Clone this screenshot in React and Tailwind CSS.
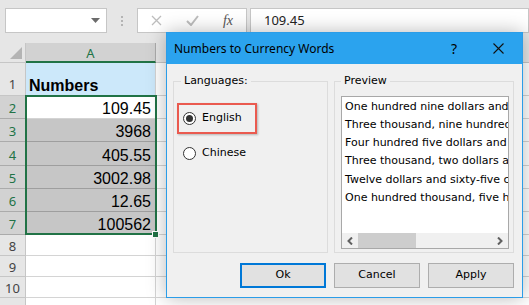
import React from 'react';

const CELLS = [
  { n: 2, v: '109.45', h: 'h-[23px]', active: true },
  { n: 3, v: '3968', h: 'h-[23px]' },
  { n: 4, v: '405.55', h: 'h-[24px]' },
  { n: 5, v: '3002.98', h: 'h-[23px]' },
  { n: 6, v: '12.65', h: 'h-[23px]' },
  { n: 7, v: '100562', h: 'h-[23px]' },
];

const PREVIEW = [
  'One hundred nine dollars and forty-five cents',
  'Three thousand, nine hundred sixty-eight dollars',
  'Four hundred five dollars and fifty-five cents',
  'Three thousand, two dollars and ninety-eight cents',
  'Twelve dollars and sixty-five cents',
  'One hundred thousand, five hundred sixty-two dollars',
];

function FormulaBar() {
  return (
    <div className="flex h-[43px] items-start bg-[#e6e6e6] pl-[5px] pt-[8px]">
      <div className="relative h-[25px] w-[102px] border border-[#c6c6c6] bg-white">
        <svg className="absolute right-[6px] top-[9px]" width="9" height="5" viewBox="0 0 9 5">
          <path d="M0 0h9L4.5 5z" fill="#6b6b6b" />
        </svg>
      </div>
      <div className="flex h-[25px] w-[30px] flex-col items-center justify-center gap-[2px]">
        <span className="h-[2px] w-[2px] bg-[#b4b4b4]" />
        <span className="h-[2px] w-[2px] bg-[#b4b4b4]" />
        <span className="h-[2px] w-[2px] bg-[#b4b4b4]" />
      </div>
      <div className="grid h-[25px] w-[110px] grid-cols-3 place-items-center border border-[#c6c6c6] bg-white">
        <svg width="11" height="11" viewBox="0 0 11 11">
          <path d="M1 1l9 9M10 1l-9 9" stroke="#bdbdbd" strokeWidth="1.3" />
        </svg>
        <svg width="13" height="11" viewBox="0 0 13 11">
          <path d="M1 6l4 4 7-9" stroke="#bdbdbd" strokeWidth="2" fill="none" />
        </svg>
        <span className="font-['Liberation_Serif',serif] text-[14px] italic leading-none text-[#555]">fx</span>
      </div>
      <div className="ml-[3px] flex h-[25px] flex-1 items-center border border-[#c6c6c6] bg-white pl-[13px] font-['Noto_Sans',sans-serif] text-[13px] text-[#222]">
        109.45
      </div>
    </div>
  );
}

function Grid() {
  return (
    <div className="relative">
      <div className="flex h-[20px]">
        <div className="relative w-[26px] border-b border-r border-[#c6c6c6] bg-[#e6e6e6]">
          <svg className="absolute bottom-[3px] right-[3px]" width="12" height="12" viewBox="0 0 12 12">
            <path d="M12 0v12H0z" fill="#b4b4b4" />
          </svg>
        </div>
        <div className="flex w-[130px] items-center justify-center border-b-2 border-r border-b-[#217346] border-r-[#ababab] bg-[#d2d2d2] pt-[2px] font-['Noto_Sans',sans-serif] text-[13px] leading-none text-[#217346]">
          A
        </div>
        <div className="flex-1 border-b border-[#c6c6c6] bg-[#e6e6e6]" />
      </div>

      <div className="flex h-[33px]">
        <div className="flex w-[26px] items-end justify-center border-b border-r border-[#c6c6c6] bg-[#e6e6e6] pb-[4px] font-['Noto_Sans',sans-serif] text-[13px] leading-none text-[#444]">
          1
        </div>
        <div className="flex w-[130px] items-end border-b border-r border-[#d4d4d4] bg-[#cce8fa] pb-[1px] pl-[3px] text-[16px] font-bold leading-none text-black">
          Numbers
        </div>
        <div className="flex-1 border-b border-[#d4d4d4]" />
      </div>

      {CELLS.map((c) => (
        <div key={c.n} className={`flex ${c.h}`}>
          <div className="flex w-[26px] items-center justify-center border-b border-r border-[#ababab] bg-[#d2d2d2] pt-[3px] font-['Noto_Sans',sans-serif] text-[13px] leading-none text-[#217346]">
            {c.n}
          </div>
          <div
            className={
              c.active
                ? 'flex w-[130px] items-end justify-end border-b border-r border-[#d4d4d4] bg-white pb-[1px] pr-[4px] text-[16px] leading-none text-black'
                : 'flex w-[130px] items-end justify-end border-b border-r border-[#9e9e9e] bg-[#c6c6c6] pb-[1px] pr-[4px] text-[16px] leading-none text-black'
            }
          >
            {c.v}
          </div>
          <div className="flex-1 border-b border-[#d4d4d4]" />
        </div>
      ))}

      {[8, 9, 10, 11].map((n) => (
        <div key={n} className="flex h-[21px]">
          <div className="flex w-[26px] items-center justify-center border-b border-r border-[#c6c6c6] bg-[#e6e6e6] pt-[2px] font-['Noto_Sans',sans-serif] text-[13px] leading-none text-[#444]">
            {n}
          </div>
          <div className="w-[130px] border-b border-r border-[#d4d4d4]" />
          <div className="flex-1 border-b border-[#d4d4d4]" />
        </div>
      ))}

      {/* selection outline A2:A7 */}
      <div className="pointer-events-none absolute left-[25px] top-[52px] h-[140px] w-[132px] border-2 border-[#217346]" />
      <div className="absolute left-[152px] top-[188px] h-[7px] w-[7px] border border-white bg-[#217346]" />
    </div>
  );
}

function Radio({ checked }) {
  return (
    <span className="flex h-[13px] w-[13px] items-center justify-center rounded-full border border-[#333] bg-white">
      {checked && <span className="h-[7px] w-[7px] rounded-full bg-[#333]" />}
    </span>
  );
}

function Dialog() {
  return (
    <div className="absolute left-[166px] top-[32px] flex h-[266px] w-[357px] flex-col border border-[#2b9de8] bg-[#f0f0f0] shadow-[0_0_18px_rgba(0,0,0,0.28)]">
      <div className="flex h-[31px] items-center bg-[#2ba3ee] pl-[7px] font-['Noto_Sans',sans-serif] text-[12px] text-black">
        <span className="flex-1">Numbers to Currency Words</span>
        <span className="w-[44px] text-center text-[14px]">?</span>
        <span className="flex w-[46px] justify-center pr-[2px]">
          <svg width="11" height="11" viewBox="0 0 11 11">
            <path d="M0.5 0.5l10 10M10.5 0.5l-10 10" stroke="#111" strokeWidth="1.1" />
          </svg>
        </span>
      </div>

      <div className="flex flex-1 flex-col pl-[6px] pr-[8px] pt-[9px] font-['DejaVu_Sans',sans-serif] text-[11px] text-black">
        <div className="flex h-[180px] gap-[6px]">
          <fieldset className="w-[155px] min-w-0 shrink-0 border border-[#dcdcdc]">
            <legend className="ml-[7px] px-[3px]">Languages:</legend>
            <div className="ml-[3px] mt-[13px] flex h-[31px] w-[80px] items-center gap-[6px] border-2 border-[#ea5a4f] pl-[4px] shadow-[1px_1px_2px_rgba(0,0,0,0.25)]">
              <Radio checked />
              <span>English</span>
            </div>
            <div className="ml-[9px] mt-[10px] flex h-[20px] items-center gap-[6px]">
              <Radio />
              <span>Chinese</span>
            </div>
          </fieldset>

          <fieldset className="flex w-[180px] min-w-0 shrink-0 flex-col border border-[#dcdcdc]">
            <legend className="ml-[6px] px-[3px]">Preview</legend>
            <div className="mb-[3px] ml-[6px] mr-[4px] mt-[6px] flex h-[157px] min-w-0 flex-col overflow-hidden border border-[#a8a8a8] bg-white">
              <div className="min-w-0 flex-1 overflow-hidden whitespace-nowrap pl-[3px] pt-[1px] leading-[18.3px]">
                {PREVIEW.map((t) => (
                  <div key={t}>{t}</div>
                ))}
              </div>
              <div className="flex h-[15px] items-center bg-[#f0f0f0]">
                <span className="flex w-[16px] justify-center">
                  <svg width="6" height="8" viewBox="0 0 6 8">
                    <path d="M5 0.5L1.5 4 5 7.5" stroke="#606060" strokeWidth="2" fill="none" />
                  </svg>
                </span>
                <span className="h-full w-[58px] bg-[#cdcdcd]" />
                <span className="flex-1" />
                <span className="flex w-[16px] justify-center">
                  <svg width="6" height="8" viewBox="0 0 6 8">
                    <path d="M1 0.5L4.5 4 1 7.5" stroke="#606060" strokeWidth="2" fill="none" />
                  </svg>
                </span>
              </div>
            </div>
          </fieldset>
        </div>

        <div className="mt-[10px] flex justify-end gap-[8px]">
          <button className="h-[25px] w-[86px] border-2 border-[#0078d7] bg-[#e1e1e1]">Ok</button>
          <button className="h-[25px] w-[86px] border border-[#adadad] bg-[#e1e1e1]">Cancel</button>
          <button className="h-[25px] w-[86px] border border-[#adadad] bg-[#e1e1e1]">Apply</button>
        </div>
      </div>
    </div>
  );
}

export default function App() {
  return (
    <div className="relative h-[305px] w-[529px] overflow-hidden bg-white font-['Liberation_Sans',sans-serif]">
      <FormulaBar />
      <Grid />
      <Dialog />
    </div>
  );
}
